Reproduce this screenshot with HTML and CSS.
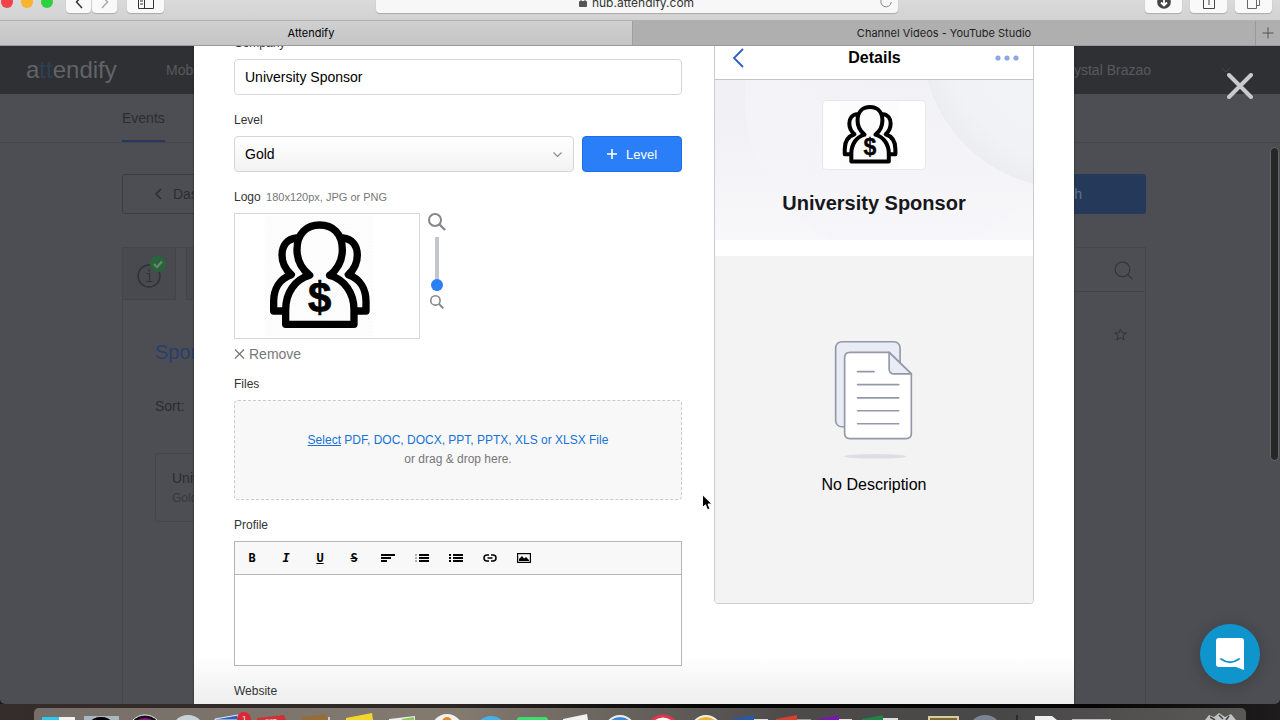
FILE: index.html
```html
<!DOCTYPE html>
<html lang="en">
<head>
  <title>Attendify</title>
  <meta charset="UTF-8">
  <link rel="stylesheet" href="styles.css">
</head>
<body>
<!-- shared drawings -->
<svg class="defs" aria-hidden="true">
  <defs>
    <pattern id="hatch" width="10" height="10" patternUnits="userSpaceOnUse">
      <path d="M0 0L10 10" stroke="#f1f1f1" stroke-width="2"/>
    </pattern>
  </defs>
  <symbol id="sponsor-logo" viewBox="16 103 552 372">
    <rect x="105" y="108" width="325" height="362" fill="url(#hatch)"/>
    <g fill="none" stroke="#000" stroke-width="22" stroke-linecap="round" stroke-linejoin="round">
      <path d="M200 175C173 177 157 198 157 226C157 251 168 270 185 285C150 297 132 328 132 365V394H165"/>
      <path d="M340 175C367 177 383 198 383 226C383 251 373 270 356 285C391 297 409 328 409 365V394H376"/>
      <path d="M300 287C325 268 338 240 338 210C338 160 308 136 270 136C232 136 202 160 202 210C202 240 216 268 240 287C195 300 168 340 168 390V434H373V390C373 340 345 300 300 287"/>
    </g>
    <text x="270" y="396" text-anchor="middle" font-family="Liberation Sans, sans-serif" font-weight="700" font-size="126" stroke="#000" stroke-width="2">$</text>
  </symbol>
  <symbol id="glass" viewBox="0 0 18 18">
    <circle cx="7" cy="7" r="6" fill="none" stroke="currentColor" stroke-width="2"/>
    <path d="M11.5 11.5L17 17" stroke="currentColor" stroke-width="2.4"/>
  </symbol>
  <symbol id="thin-glass" viewBox="0 0 18 18">
    <circle cx="8" cy="8" r="7" fill="none" stroke="currentColor"/>
    <path d="M13 13L17.500 17.500" stroke="currentColor"/>
  </symbol>
</svg>

<header class="chrome">
  <div class="toolbar">
    <div class="tools">
      <span class="light red"></span><span class="light yellow"></span><span class="light green"></span>
      <button class="tool back" aria-label="Back"><svg width="8" height="14" viewBox="0 0 8 14"><path d="M7 1L1.500 7L7 13" fill="none" stroke="#333" stroke-width="1.500"/></svg></button>
      <button class="tool forward" aria-label="Forward"><svg width="8" height="14" viewBox="0 0 8 14"><path d="M1 1L6.500 7L1 13" fill="none" stroke="#aaa" stroke-width="1.500"/></svg></button>
      <button class="tool wide" aria-label="Sidebar"><svg width="16" height="14" viewBox="0 0 16 14"><path d="M.5 .5H15.500V13.500H.5ZM6.500 .5V13.500M2 6H5M2 9H5" fill="none" stroke="#333"/></svg></button>
    </div>
    <div class="address">
      <svg width="8" height="10" viewBox="0 0 8 10"><rect y="4" width="8" height="6" rx="1" fill="#555"/><path d="M2 5V2.500A2 2 0 0 1 6 2.500V5" fill="none" stroke="#555"/></svg>
      <span>hub.attendify.com</span>
      <svg class="reload" width="12" height="12" viewBox="0 0 12 12"><path d="M10.500 3A5.200 5.200 0 1 0 11.200 6" fill="none" stroke="#888"/></svg>
    </div>
    <div class="tools end">
      <button class="tool wide" aria-label="Downloads"><svg width="14" height="14" viewBox="0 0 14 14"><circle cx="7" cy="7" r="6.800" fill="#444"/><path d="M7 3V10M4 7.500L7 10.500L10 7.500" fill="none" stroke="#fff" stroke-width="1.800"/></svg></button>
      <button class="tool wide" aria-label="Share"><svg width="12" height="14" viewBox="0 0 12 14"><path d="M4 3.500H.5V13.500H11.500V3.500H8M6 0V10" fill="none" stroke="#444"/></svg></button>
      <button class="tool wide" aria-label="Tabs"><svg width="13" height="13" viewBox="0 0 13 13"><path d="M.5 3.500H9.500V12.500H.5ZM3.500 3V.5H12.500V9.500H10" fill="none" stroke="#666"/></svg></button>
    </div>
  </div>
  <nav class="tabs">
    <a class="tab active" href="#">Attendify</a>
    <a class="tab" href="#">Channel Videos - YouTube Studio</a>
    <button class="newtab" aria-label="New tab"><svg width="12" height="12" viewBox="0 0 12 12"><path d="M6 .5V11.500M.5 6H11.500" stroke="#555"/></svg></button>
  </nav>
</header>

<div class="viewport">
  <div class="page">
    <div class="topbar">
      <a class="brand" href="#">a<span>tt</span>endify</a>
      <a class="apps" href="#">Mobile</a>
      <span class="user">Crystal Brazao</span>
      <svg class="user-arrow" width="8" height="5" viewBox="0 0 8 5"><path d="M0 0L4 4L8 0" fill="none" stroke="#45464a"/></svg>
    </div>
    <div class="subnav"><div class="wrap"><a href="#">Events</a></div></div>
    <div class="wrap">
      <div class="actions">
        <a class="dash" href="#"><svg width="7" height="12" viewBox="0 0 7 12"><path d="M6 1L1 6L6 11" fill="none" stroke="currentColor" stroke-width="1.500"/></svg>Dashboard</a>
        <button class="publish">Publish</button>
      </div>
      <div class="panel">
        <div class="panel-head">
          <div class="step">
            <svg width="32" height="34" viewBox="0 0 32 34"><circle cx="12" cy="21" r="11" fill="none" stroke="#313236" stroke-width="1.500"/><path d="M9.500 18.500H12.500V26M9 26.500H15.500" fill="none" stroke="#313236" stroke-width="1.200"/><circle cx="12" cy="15.500" r="1" fill="#313236"/><circle cx="21" cy="9" r="8" fill="#28653a"/><path d="M17 9L20 12L25 6.500" fill="none" stroke="#70857a" stroke-width="2"/></svg>
          </div>
          <div class="step next"></div>
          <div class="find"><svg width="19" height="19"><use href="#thin-glass"/></svg></div>
        </div>
        <div class="panel-body">
          <div class="panel-title">
            <h2>Sponsors</h2>
            <svg width="13" height="13" viewBox="0 0 13 13"><path d="M6.500 1L8.100 4.800L12.300 5L9 7.700L10.200 12L6.500 9.600L2.800 12L4 7.700L.7 5L4.900 4.800Z" fill="none" stroke="#313236"/></svg>
          </div>
          <p class="sort">Sort:</p>
          <div class="card"><strong>University Sponsor</strong><small>Gold</small></div>
        </div>
      </div>
    </div>
  </div>

  <div class="modal-layer">
    <section class="modal">
      <form class="form">
        <div class="field">
          <label for="company">Company</label>
          <input id="company" class="text" type="text" value="University Sponsor">
        </div>
        <div class="field">
          <label for="level">Level</label>
          <div class="row">
            <div class="select">
              <select id="level"><option>Gold</option></select>
              <svg width="9" height="6" viewBox="0 0 9 6"><path d="M.5 .5L4.500 4.500L8.500 .5" fill="none" stroke="#8d8d8d" stroke-width="1.200"/></svg>
            </div>
            <button type="button" class="add"><svg width="10" height="10" viewBox="0 0 10 10"><path d="M5 0V10M0 5H10" stroke="#fff" stroke-width="1.600"/></svg>Level</button>
          </div>
        </div>
        <div class="field">
          <label for="zoom">Logo <small>180x120px, JPG or PNG</small></label>
          <div class="row">
            <div class="thumb"><svg width="184" height="124"><use href="#sponsor-logo"/></svg></div>
            <div class="zoom">
              <svg width="18" height="18"><use href="#glass"/></svg>
              <input id="zoom" type="range" min="0" max="100" value="0">
              <svg width="14" height="14"><use href="#glass"/></svg>
            </div>
          </div>
          <button type="button" class="remove"><svg width="11" height="10" viewBox="0 0 11 10"><path d="M1 .5L10 9.500M10 .5L1 9.500" stroke="#777" stroke-width="1.300"/></svg>Remove</button>
        </div>
        <div class="field">
          <label for="files">Files</label>
          <div class="drop">
            <input id="files" class="hidden-file" type="file">
            <div class="types"><a href="#">Select</a> PDF, DOC, DOCX, PPT, PPTX, XLS or XLSX File</div>
            <div>or drag &amp; drop here.</div>
          </div>
        </div>
        <div class="field">
          <label for="profile">Profile</label>
          <div class="editor">
            <div class="marks">
              <button type="button">B</button>
              <button type="button"><i>I</i></button>
              <button type="button"><u>U</u></button>
              <button type="button"><s>S</s></button>
              <button type="button" aria-label="Align"><svg width="14" height="8" viewBox="0 0 14 8"><path d="M0 1H14M0 4H10M0 7H6" stroke="#000" stroke-width="2"/></svg></button>
              <button type="button" aria-label="Numbered list"><svg width="14" height="8" viewBox="0 0 14 8"><path d="M4 1H14M4 4H14M4 7H14" stroke="#000" stroke-width="2"/><path d="M1 0V8" stroke="#666" stroke-dasharray="2 1"/></svg></button>
              <button type="button" aria-label="Bullet list"><svg width="14" height="8" viewBox="0 0 14 8"><path d="M0 1H2M4 1H14M0 4H2M4 4H14M0 7H2M4 7H14" stroke="#000" stroke-width="2"/></svg></button>
              <button type="button" aria-label="Link"><svg width="14" height="8" viewBox="0 0 14 8"><path d="M6 1H4A3 3 0 0 0 4 7H6M8 1H10A3 3 0 0 1 10 7H8M4.500 4H9.500" fill="none" stroke="#000" stroke-width="1.500"/></svg></button>
              <button type="button" aria-label="Image"><svg width="14" height="10" viewBox="0 0 14 10"><rect x=".6" y=".6" width="12.800" height="8.800" fill="none" stroke="#000" stroke-width="1.200"/><path d="M2 8V6L5 3L7 5.500L9 4L12 7V8Z"/></svg></button>
            </div>
            <textarea id="profile"></textarea>
          </div>
        </div>
        <div class="field">
          <label for="website">Website</label>
          <input id="website" class="text" type="text">
        </div>
      </form>

      <div class="preview">
        <div class="bar">
          <svg width="12" height="20" viewBox="0 0 12 20"><path d="M11 1L2 10L11 19" fill="none" stroke="#2c5fc4" stroke-width="1.800"/></svg>
          <b>Details</b>
          <svg width="24" height="6" viewBox="0 0 24 6" fill="#8fa9e0"><circle cx="3" cy="3" r="2.600"/><circle cx="12" cy="3" r="2.600"/><circle cx="21" cy="3" r="2.600"/></svg>
        </div>
        <div class="banner">
          <svg class="swirl" viewBox="0 0 318 160" preserveAspectRatio="none">
            <defs>
              <radialGradient id="g1"><stop offset="0" stop-color="#f3f4f7"/><stop offset=".8" stop-color="#f1f2f6"/><stop offset="1" stop-color="#ecedf1"/></radialGradient>
              <linearGradient id="g2"><stop offset="0" stop-color="#f5f5f9" stop-opacity=".7"/><stop offset=".5" stop-color="#f5f5f9" stop-opacity=".4"/></linearGradient>
            </defs>
            <circle cx="186" cy="20" r="156" fill="url(#g2)"/>
            <circle cx="355" cy="-40" r="149" fill="url(#g1)" stroke="#f6f6f9"/>
          </svg>
          <div class="badge"><svg width="102" height="68"><use href="#sponsor-logo"/></svg></div>
          <h1>University Sponsor</h1>
        </div>
        <div class="empty">
          <svg width="83" height="122" viewBox="100 58 250 365">
            <g stroke="#9499a9" stroke-width="5" stroke-linejoin="round" stroke-linecap="round">
              <rect x="108" y="65" width="194" height="256" rx="18" fill="#e9ebf5"/>
              <path d="M151 97H269L336 162V341Q336 357 320 357H151Q135 357 135 341V113Q135 97 151 97Z" fill="#fff"/>
              <path d="M269 97V146Q269 162 285 162H336Z" fill="#e9ebf5"/>
              <path d="M174 155H224M174 194H298M174 234H298M174 273H298M174 312H298"/>
            </g>
            <ellipse cx="227" cy="410" rx="94" ry="7" fill="#dedee2"/>
          </svg>
          <p>No Description</p>
        </div>
      </div>
    </section>
  </div>

  <button class="close" aria-label="Close"><svg width="26" height="26" viewBox="0 0 26 26"><path d="M2 2L24 24M24 2L2 24" stroke="#c8c9cb" stroke-width="4" stroke-linecap="round"/></svg></button>
  <div class="scroll"></div>
  <button class="chat" aria-label="Chat"><svg width="28" height="32" viewBox="0 0 28 32"><path d="M3 0H25Q28 0 28 3V32L20 29H3Q0 29 0 26V3Q0 0 3 0Z" fill="#fff"/><path d="M5 21Q14 27.500 23 21" fill="none" stroke="#0f94cc" stroke-width="1.800" stroke-linecap="round"/></svg></button>
  <svg class="pointer" width="11" height="17" viewBox="0 0 11 17"><path d="M.5 .8V13.500L3.500 10.800L5.500 15.800L8 14.800L6 10H10Z" fill="#000" stroke="#fff"/></svg>
</div>

<footer class="desk">
  <div class="dock">
    <svg width="1212" height="12" viewBox="34 708 1212 12">
      <path d="M42 717H59V720H42Z" fill="#30c9ee"/><path d="M59 717H75V720H59Z" fill="#f1f1f1"/>
      <path d="M84 716H119V720H84Z" fill="#a9b8c0"/><ellipse cx="101" cy="722" rx="10" ry="5"/>
      <circle cx="145" cy="732" r="17" fill="#111" stroke="#eee"/><circle cx="145" cy="732" r="14" fill="#8b1487"/>
      <circle cx="188" cy="732" r="17" fill="#c9d3d6"/>
      <path d="M215 719L238 715V720H215Z" fill="#2a61c0" stroke="#eee"/>
      <path d="M257 718L284 715L286 720H257Z" fill="#d22f38"/><text x="265" y="723" font-family="Roboto, sans-serif" font-size="6" fill="#fff">OCT</text>
      <path d="M302 717L326 714L328 720H301Z" fill="#956d37"/><path d="M328 717H330V720H328Z" fill="#ccc"/>
      <path d="M346 718L372 713L373 720H346Z" fill="#f4d52c"/>
      <path d="M389 719L415 716V720H389Z" fill="#eee"/><path d="M402 719L414 717V720H402Z" fill="#8cc95a"/>
      <circle cx="447" cy="730" r="16" fill="#f4f2ef"/><circle cx="447" cy="722" r="5" fill="#e58a2b"/>
      <circle cx="491" cy="732" r="16" fill="#47b1e6"/>
      <rect x="517" y="717" width="31" height="8" rx="3" fill="#3be06c"/>
      <path d="M563 719L587 714L588 720H563Z" fill="#f1f1f1"/>
      <circle cx="620" cy="731" r="15" fill="#3d86d8" stroke="#eee" stroke-width="2"/>
      <circle cx="663" cy="731" r="15" fill="#fff" stroke="#df384d" stroke-width="3"/>
      <circle cx="706" cy="731" r="15" fill="#f2b32c" stroke="#eee" stroke-width="2"/>
      <path d="M754 719H768V720H754Z" fill="#ddd"/><path d="M732 719L754 715V720H732Z" fill="#2b57a8"/>
      <path d="M797 719H811V720H797Z" fill="#999"/><path d="M776 719L797 715V720H776Z" fill="#d6402f"/>
      <path d="M839 719H852V720H839Z" fill="#ddd"/><path d="M818 719L839 715V720H818Z" fill="#7719aa"/>
      <path d="M883 718H898V720H883Z" fill="#ddd"/><path d="M862 719L883 715V720H862Z" fill="#21824a"/>
      <path d="M928 716H959V720H928Z" fill="#d6cda8"/><path d="M930 718H957V720H930Z" fill="#80692f"/>
      <circle cx="985" cy="732" r="17" fill="#7b8494"/>
      <path d="M1017 715V720" stroke="#111"/>
      <path d="M1035 716H1052L1057 720H1035Z" fill="#eee"/>
      <path d="M1072 719H1111V720H1072Z" fill="#bbb"/>
      <path d="M1205 720L1209 715L1214 717L1219 713L1225 717L1231 714L1236 720Z" fill="#bfc3c4"/><path d="M1210 717L1215 720M1219 715L1223 719M1229 716L1226 720" stroke="#444" stroke-width="1.500"/>
      <circle cx="244" cy="719" r="7" fill="#dc2636"/><text x="242" y="721" font-family="Roboto, sans-serif" font-size="8" fill="#fff">1</text>
    </svg>
  </div>
</footer>
</body>
</html>
```
FILE: styles.css
```css
*{
  box-sizing: border-box;
}
body{
  margin: 0;
  height: 100vh;
  display: flex;
  flex-direction: column;
  overflow: hidden;
  background-color: #1b1919;
  font-family: "Liberation Sans", Arial, sans-serif;
  font-size: 14px;
  color: #000;
}
button, input, select, textarea{
  font: inherit;
  color: inherit;
  margin: 0;
}
button{
  border: none;
  padding: 0;
  background: none;
}
a{
  color: inherit;
  text-decoration: none;
}
svg{
  display: block;
  flex: none;
}
h1, h2, p{
  margin: 0;
}
.defs{
  position: absolute;
  width: 0;
  height: 0;
}

/* browser window */
.chrome{
  font-family: Inter, sans-serif;
  font-size: 11px;
}
.toolbar{
  height: 20px;
  overflow: hidden;
  display: grid;
  grid-template-columns: 1fr minmax(0, 522px) 1fr;
  align-content: end;
  padding: 0 8px 7px 1px;
  background: linear-gradient(#dadada, #d2d2d2);
}
.tools{
  display: flex;
  align-items: center;
}
.tools.end{
  justify-content: flex-end;
  gap: 8px;
}
.light{
  width: 12px;
  height: 12px;
  margin-right: 8px;
  border-radius: 6px;
}
.red{
  background-color: #f0434c;
}
.yellow{
  background-color: #f6b42f;
}
.green{
  background-color: #2fd040;
}
.tool{
  width: 25px;
  height: 22px;
  margin-right: 1px;
  display: flex;
  align-items: center;
  justify-content: center;
  border-radius: 4px;
  background-color: #f9f9f9;
  box-shadow: 0 1px 1px #aaa;
}
.back{
  margin-left: 5px;
}
.forward{
  margin-right: 10px;
}
.tool.wide{
  width: 37px;
  margin-right: 0;
}
.address{
  height: 22px;
  display: flex;
  align-items: center;
  justify-content: center;
  gap: 5px;
  position: relative;
  border-radius: 4px;
  background-color: #f7f7f7;
  box-shadow: 0 1px 1px #aaa;
  color: #333;
  font-size: 12px;
}
.reload{
  position: absolute;
  right: 6px;
}
.tabs{
  height: 26px;
  display: flex;
  border-top: 1px solid #b0b0b0;
  border-bottom: 1px solid #999;
  background-color: #afafaf;
}
.tab{
  flex: 1;
  line-height: 25px;
  text-align: center;
  color: #222;
}
.tab.active{
  padding-right: 10px;
  border-right: 1px solid #a0a0a0;
  background: linear-gradient(#d0d0d0, #c5c5c5);
  color: #000;
}
.newtab{
  width: 25px;
  display: flex;
  align-items: center;
  justify-content: center;
  border-left: 1px solid #999;
}
.viewport{
  flex: 1;
  min-height: 0;
  position: relative;
  overflow: hidden;
  border-radius: 0 0 5px 5px;
  background-color: #4d4e53;
}

/* dimmed event page */
.page{
  padding-right: 12px;
  color: #2b2c30;
}
.wrap{
  max-width: 1024px;
  margin: 0 auto;
}
.topbar{
  height: 48px;
  margin-right: -12px;
  padding: 0 50px 0 26px;
  display: flex;
  align-items: center;
  background-color: #2f3034;
  color: #58595d;
}
.brand{
  width: 140px;
  font-size: 24px;
  line-height: 48px;
  color: #626367;
}
.brand span{
  color: #2c4057;
}
.apps{
  flex: 1;
}
.user{
  margin-right: 71px;
}
.subnav{
  height: 49px;
  margin-right: -12px;
  padding-right: 12px;
  border-bottom: 1px solid #45464b;
}
.subnav a{
  display: inline-block;
  height: 48px;
  line-height: 48px;
  border-bottom: 2px solid #29375c;
}
.actions{
  display: flex;
  justify-content: space-between;
  margin: 31px 0 33px;
}
.dash{
  width: 150px;
  height: 40px;
  padding-left: 32px;
  display: flex;
  align-items: center;
  gap: 11px;
  border: 1px solid #3c3d41;
  border-radius: 3px;
}
.publish{
  width: 174px;
  border-radius: 3px;
  background-color: #253a5b;
  color: #63728a;
}
.panel{
  height: 700px;
  border: 1px solid #45464b;
}
.panel-head{
  display: flex;
  align-items: flex-start;
}
.step{
  width: 53px;
  height: 52px;
  padding: 7px 14px;
  border-right: 1px solid #434448;
  border-bottom: 1px solid #434448;
  background-color: #494a4f;
}
.step.next{
  margin-left: 10px;
  border-left: 1px solid #434448;
}
.find{
  flex: 1;
  height: 44px;
  padding: 13px 12px;
  display: flex;
  justify-content: flex-end;
  border-bottom: 1px solid #434448;
  color: #313236;
}
.panel-body{
  padding: 28px 32px;
}
.panel-title{
  display: flex;
  justify-content: space-between;
  margin-right: -14px;
}
.panel-title h2{
  margin-top: 12px;
  font-size: 20px;
  font-weight: 400;
  line-height: 24px;
  color: #293e6b;
}
.sort{
  margin: 34px 0 39px;
  line-height: 16px;
}
.card{
  max-width: 448px;
  height: 69px;
  padding: 15px 16px;
  border: 1px solid #45464b;
  border-radius: 3px;
}
.card strong, .card small{
  display: block;
  font-weight: 400;
  line-height: 18px;
}
.card small{
  margin-top: 2px;
  font-size: 12px;
  color: #37383c;
}

/* sponsor dialog, scrolled a little */
.modal-layer{
  position: absolute;
  top: -11px;
  right: 12px;
  bottom: 0;
  left: 0;
  display: flex;
  justify-content: center;
}
.modal{
  width: 880px;
  padding: 0 40px;
  display: flex;
  align-items: flex-start;
  gap: 32px;
  overflow: hidden;
  background: linear-gradient(to top, #eeeeee, #fff 48px);
  box-shadow: 0 0 2px #222;
}
.form{
  flex: 1;
  min-width: 0;
}
.field{
  margin-bottom: 17px;
}
.field label{
  display: block;
  margin-bottom: 8px;
  font-size: 12px;
  line-height: 16px;
  color: #333;
}
.field label small{
  margin-left: 2px;
  font-size: 11px;
  color: #777;
}
.row{
  display: flex;
  gap: 8px;
}
.text{
  display: block;
  width: 100%;
  height: 36px;
  padding: 0 10px;
  border: 1px solid #d6d6d6;
  border-radius: 4px;
  background-color: #fff;
}
.select{
  flex: 1;
  position: relative;
}
.select select{
  appearance: none;
  width: 100%;
  height: 36px;
  padding: 0 10px;
  border: 1px solid #d6d6d6;
  border-radius: 4px;
  background: linear-gradient(#fff, #f2f2f2);
}
.select svg{
  position: absolute;
  top: 16px;
  right: 12px;
  pointer-events: none;
}
.add{
  width: 100px;
  height: 36px;
  display: flex;
  align-items: center;
  justify-content: center;
  gap: 9px;
  border: 1px solid #1b6fe6;
  border-radius: 4px;
  background-color: #2a7ff8;
  font-size: 13px;
  color: #fff;
}
.thumb{
  width: 186px;
  height: 126px;
  border: 1px solid #d6d6d6;
}
.zoom{
  display: flex;
  flex-direction: column;
  align-items: center;
  color: #85858a;
}
.zoom input{
  appearance: none;
  writing-mode: vertical-lr;
  direction: rtl;
  width: 12px;
  height: 54px;
  margin: 6px 0 4px;
  background: linear-gradient(to right, transparent 4px, #c4c4cc 4px, #c4c4cc 8px, transparent 8px);
}
.zoom input::-webkit-slider-thumb{
  appearance: none;
  width: 12px;
  height: 12px;
  border-radius: 6px;
  background-color: #2a7ff8;
}
.remove{
  display: flex;
  align-items: center;
  gap: 4px;
  margin: 7px 0 -3px;
  line-height: 16px;
  color: #777;
}
.drop{
  height: 100px;
  padding-top: 30px;
  border: 1px dashed #ccc;
  border-radius: 4px;
  background-color: #f8f8f8;
  text-align: center;
  font-size: 12px;
  line-height: 19px;
  color: #777;
}
.hidden-file{
  display: none;
}
.types{
  color: #1672d4;
}
.types a{
  text-decoration: underline;
}
.editor{
  border: 1px solid #b5b5b5;
}
.marks{
  display: flex;
  border-bottom: 1px solid #b5b5b5;
  background-color: #f8f8f8;
}
.marks button{
  width: 34px;
  height: 32px;
  display: flex;
  align-items: center;
  justify-content: center;
  font: 700 12px "DejaVu Sans Mono", monospace;
}
.editor textarea{
  display: block;
  width: 100%;
  height: 90px;
  border: none;
  resize: none;
}

/* phone preview */
.preview{
  width: 320px;
  border: 1px solid #ccc;
  border-radius: 4px;
  overflow: hidden;
}
.bar{
  height: 44px;
  padding: 0 14px 0 17px;
  display: flex;
  align-items: center;
  justify-content: space-between;
  border-bottom: 1px solid #c4c4c8;
  font-size: 16px;
}
.bar b{
  padding-left: 10px;
}
.banner{
  height: 160px;
  padding-top: 20px;
  position: relative;
  background: linear-gradient(#efeff4, #f8f8fa);
  text-align: center;
}
.swirl{
  position: absolute;
  top: 0;
  left: 0;
  width: 100%;
  height: 160px;
}
.badge{
  position: relative;
  width: 104px;
  height: 70px;
  margin: 0 auto;
  border: 1px solid #e8e8ec;
  border-radius: 4px;
  background-color: #fff;
}
.banner h1{
  position: relative;
  margin-top: 21px;
  font-size: 20px;
  line-height: 24px;
  color: #17181c;
}
.empty{
  height: 347px;
  margin-top: 16px;
  padding-top: 83px;
  display: flex;
  flex-direction: column;
  align-items: center;
  background-color: #f3f3f3;
}
.empty p{
  margin-top: 14px;
  font-size: 16px;
  line-height: 20px;
}

/* things floating over the page */
.close{
  position: absolute;
  top: 27px;
  right: 27px;
}
.scroll{
  position: absolute;
  top: 101px;
  right: 1px;
  width: 9px;
  height: 314px;
  border: 1px solid #66676b;
  border-radius: 5px;
  background-color: #262626;
}
.chat{
  position: absolute;
  right: 20px;
  bottom: 20px;
  width: 60px;
  height: 60px;
  display: flex;
  align-items: center;
  justify-content: center;
  border-radius: 30px;
  background-color: #0f94cc;
  box-shadow: 0 2px 16px rgba(0, 0, 0, .2);
}
.pointer{
  position: absolute;
  top: 448px;
  left: 702px;
}

/* dock */
.desk{
  padding: 4px 34px 0;
  background: linear-gradient(to right, #352d2b, #2c2725 35%, #050505 55%, #050505 85%, #1e1c1c);
}
.dock{
  height: 12px;
  overflow: hidden;
  border-radius: 5px 5px 0 0;
  background: linear-gradient(to right, #766e68, #837a70 35%, #4d4b4a 62%, #484747 80%, #5a5857);
}
```
